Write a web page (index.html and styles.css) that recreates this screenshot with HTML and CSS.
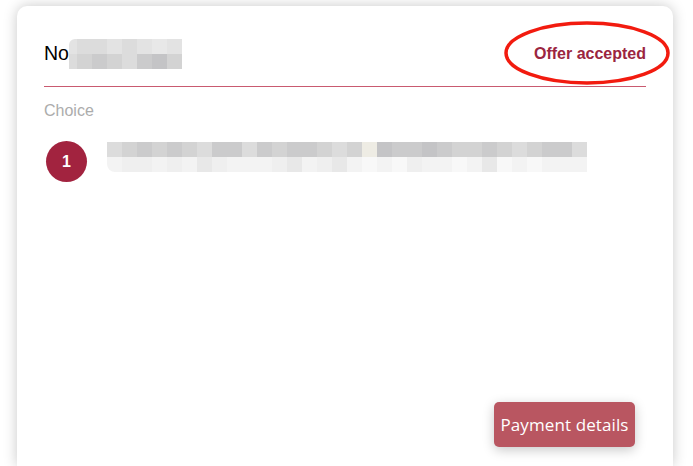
FILE: index.html
```html
<!DOCTYPE html>
<html>
<head>
<meta charset="utf-8">
<link rel="stylesheet" href="styles.css">
</head>
<body>
<div class="page">
  <div class="card">
    <div class="header">
      <div class="title">
        <span class="no">No</span>
        <div class="blur name-blur">
          <div class="brow">
            <i class="b half c4"></i><i class="b c3"></i><i class="b c3"></i><i class="b c4"></i><i class="b c3"></i><i class="b c4"></i><i class="b c5"></i><i class="b c4"></i>
          </div>
          <div class="brow">
            <i class="b half c3"></i><i class="b c2"></i><i class="b c1"></i><i class="b c2"></i><i class="b c3"></i><i class="b c1"></i><i class="b c0"></i><i class="b c2"></i>
          </div>
        </div>
      </div>
      <div class="status">Offer accepted
        <svg class="circle-mark" width="170" height="68" viewBox="0 0 170 68"><ellipse cx="85" cy="34" rx="81" ry="30" fill="none" stroke="#f21b0f" stroke-width="3.5"/></svg>
      </div>
    </div>
    <div class="label">Choice</div>
    <div class="item">
      <div class="num">1</div>
      <div class="blur line-blur">
        <div class="brow">
          <i class="b c3"></i><i class="b c2"></i><i class="b c1"></i><i class="b c2"></i><i class="b c1"></i><i class="b c2"></i><i class="b c3"></i><i class="b c1"></i><i class="b c1"></i><i class="b c3"></i><i class="b c1"></i><i class="b c2"></i><i class="b c1"></i><i class="b c1"></i><i class="b c2"></i><i class="b c3"></i><i class="b c2"></i><i class="b cw"></i><i class="b c0"></i><i class="b c1"></i><i class="b c1"></i><i class="b c0"></i><i class="b c1"></i><i class="b c2"></i><i class="b c2"></i><i class="b c1"></i><i class="b c2"></i><i class="b c3"></i><i class="b c2"></i><i class="b c1"></i><i class="b c1"></i><i class="b c3"></i>
        </div>
        <div class="brow">
          <i class="b l2"></i><i class="b l1"></i><i class="b l1"></i><i class="b l2"></i><i class="b l1"></i><i class="b l2"></i><i class="b l0"></i><i class="b l1"></i><i class="b l2"></i><i class="b l2"></i><i class="b l2"></i><i class="b l1"></i><i class="b l0"></i><i class="b l2"></i><i class="b l1"></i><i class="b l0"></i><i class="b l2"></i><i class="b l3"></i><i class="b l2"></i><i class="b l3"></i><i class="b l1"></i><i class="b l2"></i><i class="b l2"></i><i class="b l3"></i><i class="b l2"></i><i class="b l0"></i><i class="b l3"></i><i class="b l2"></i><i class="b l3"></i><i class="b l2"></i><i class="b l2"></i><i class="b l2"></i>
        </div>
      </div>
    </div>
    <button class="pay">Payment details</button>
  </div>
</div>
</body>
</html>
```
FILE: styles.css
```css
html, body {
  margin: 0;
  padding: 0;
  background: #ffffff;
  overflow: hidden;
}
body {
  font-family: "Liberation Sans", Arial, sans-serif;
  width: 693px;
  height: 466px;
}
.page {
  padding: 6px 20px 0 17px;
}
.card {
  position: relative;
  background: #fff;
  border-radius: 10px 10px 0 0;
  box-shadow: 0 0 14px rgba(0, 0, 0, 0.22);
  height: 460px;
  padding: 0 27px;
}
.header {
  height: 66px;
  padding-top: 14px;
  display: flex;
  align-items: center;
  justify-content: space-between;
  border-bottom: 1px solid #c95a70;
}
.title {
  display: flex;
  align-items: center;
}
.no {
  font-size: 19.5px;
  color: #000;
  margin-top: 1px;
}
.blur {
  display: flex;
  flex-direction: column;
}
.brow {
  display: flex;
}
.b {
  display: block;
  width: 15px;
  height: 15px;
}
.b.half { width: 8px; }
.name-blur { margin-top: 1px; }
.name-blur .brow:first-child .b:first-child { border-top-left-radius: 6px; }
.c0 { background: #c4c4c6; }
.c1 { background: #cbcbcc; }
.c2 { background: #d3d3d3; }
.c3 { background: #dcdcdc; }
.c4 { background: #e3e3e3; }
.c5 { background: #e8e8e8; }
.cw { background: #eeece4; }
.l0 { background: #e8e8e8; }
.l1 { background: #efefef; }
.l2 { background: #f3f3f3; }
.l3 { background: #f8f8f8; }
.status {
  position: relative;
  font-size: 16px;
  font-weight: bold;
  color: #9b2540;
  margin-top: 1px;
}
.circle-mark {
  position: absolute;
  left: -32px;
  top: -26px;
}
.label {
  margin-top: 15px;
  font-size: 16px;
  line-height: 18px;
  color: #acacac;
}
.item {
  display: flex;
  align-items: flex-start;
  gap: 20px;
  margin-top: 21px;
  margin-left: 2px;
}
.num {
  width: 41px;
  height: 41px;
  border-radius: 50%;
  background: #a2233f;
  color: #fff;
  font-weight: bold;
  font-size: 16px;
  display: flex;
  align-items: center;
  justify-content: center;
  flex: none;
}
.line-blur { margin-top: 1px; }
.line-blur .brow:last-child .b:first-child { border-bottom-left-radius: 8px; }
.pay {
  position: absolute;
  left: 477px;
  top: 396px;
  width: 141px;
  height: 45px;
  border: none;
  border-radius: 5px;
  background: #b95661;
  color: #fff;
  font-family: "Open Sans", sans-serif;
  font-size: 17px;
  font-weight: 500;
  letter-spacing: 0.1px;
  box-shadow: 0 3px 12px rgba(0, 0, 0, 0.22);
  padding: 0;
}
```
